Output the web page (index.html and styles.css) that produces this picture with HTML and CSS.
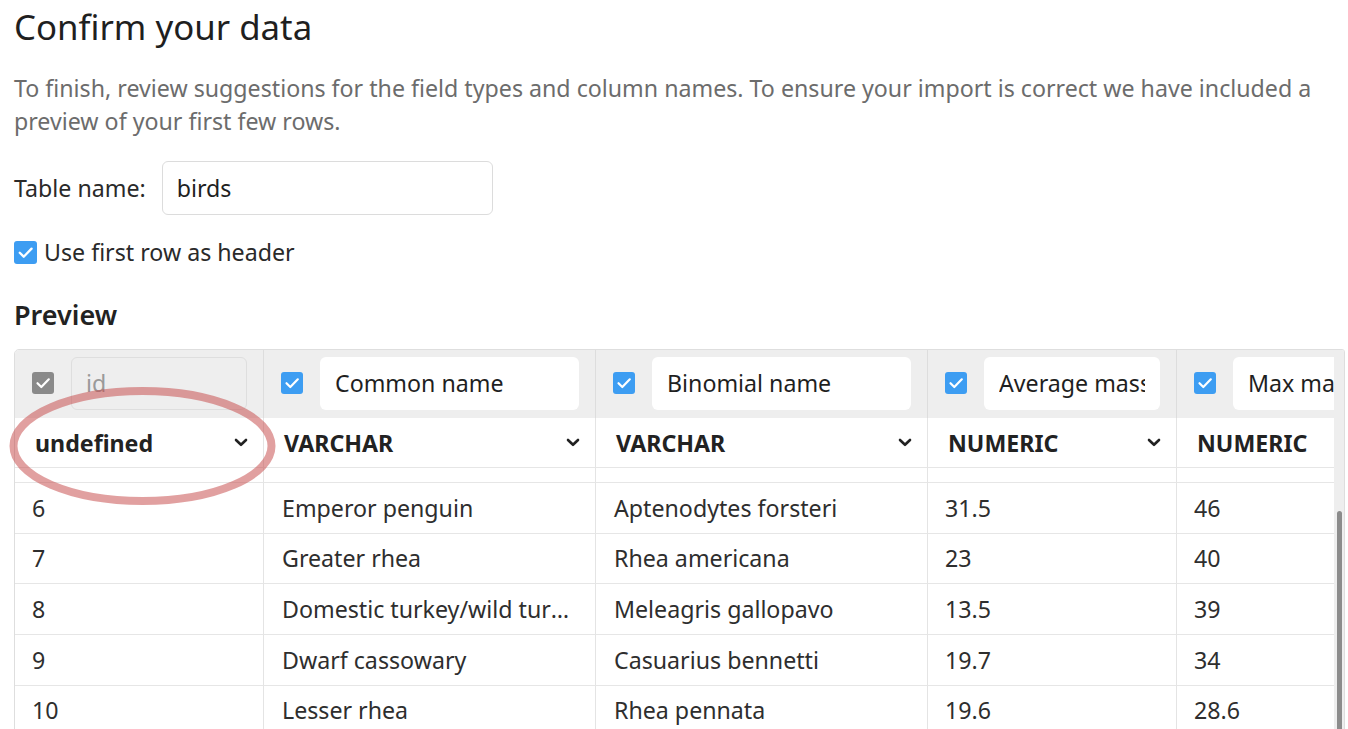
FILE: index.html
```html
<!DOCTYPE html>
<html lang="en">
<head>
<meta charset="utf-8">
<title>Confirm your data</title>
<link rel="stylesheet" href="styles.css">
</head>
<body>
<main class="page">
  <h1 class="title">Confirm your data</h1>
  <p class="intro">To finish, review suggestions for the field types and column names. To ensure your import is correct we have included a preview of your first few rows.</p>

  <div class="name-row">
    <label class="name-label" for="tname">Table name:</label>
    <input class="name-input" id="tname" type="text" value="birds">
  </div>

  <label class="check-row">
    <span class="cb cb-blue"><svg viewBox="0 0 22 22" width="23" height="23"><path d="M5.5 11.2 L9.3 15 L16.8 7.3" fill="none" stroke="#fff" stroke-width="2.2" stroke-linecap="round" stroke-linejoin="round"/></svg></span>
    <span>Use first row as header</span>
  </label>

  <h2 class="preview-title">Preview</h2>

  <div class="preview">
    <div class="viewport">
      <div class="grid">
        <!-- header inputs -->
        <div class="hcell">
          <span class="cb cb-gray"><svg viewBox="0 0 22 22" width="22" height="22"><path d="M5.5 11.2 L9.3 15 L16.8 7.3" fill="none" stroke="#fff" stroke-width="2.2" stroke-linecap="round" stroke-linejoin="round"/></svg></span>
          <input class="col-input col-input-disabled" type="text" value="id" disabled>
        </div>
        <div class="hcell">
          <span class="cb cb-blue"><svg viewBox="0 0 22 22" width="22" height="22"><path d="M5.5 11.2 L9.3 15 L16.8 7.3" fill="none" stroke="#fff" stroke-width="2.2" stroke-linecap="round" stroke-linejoin="round"/></svg></span>
          <input class="col-input" type="text" value="Common name">
        </div>
        <div class="hcell">
          <span class="cb cb-blue"><svg viewBox="0 0 22 22" width="22" height="22"><path d="M5.5 11.2 L9.3 15 L16.8 7.3" fill="none" stroke="#fff" stroke-width="2.2" stroke-linecap="round" stroke-linejoin="round"/></svg></span>
          <input class="col-input" type="text" value="Binomial name">
        </div>
        <div class="hcell">
          <span class="cb cb-blue"><svg viewBox="0 0 22 22" width="22" height="22"><path d="M5.5 11.2 L9.3 15 L16.8 7.3" fill="none" stroke="#fff" stroke-width="2.2" stroke-linecap="round" stroke-linejoin="round"/></svg></span>
          <input class="col-input" type="text" value="Average mass (kg)">
        </div>
        <div class="hcell">
          <span class="cb cb-blue"><svg viewBox="0 0 22 22" width="22" height="22"><path d="M5.5 11.2 L9.3 15 L16.8 7.3" fill="none" stroke="#fff" stroke-width="2.2" stroke-linecap="round" stroke-linejoin="round"/></svg></span>
          <input class="col-input" type="text" value="Max mass (kg)">
        </div>

        <!-- type selects -->
        <div class="tcell"><span>undefined</span><svg class="chev" viewBox="0 0 14 9" width="14" height="9"><path d="M2 2 L7 6.8 L12 2" fill="none" stroke="#222" stroke-width="2.6" stroke-linecap="round" stroke-linejoin="round"/></svg></div>
        <div class="tcell"><span>VARCHAR</span><svg class="chev" viewBox="0 0 14 9" width="14" height="9"><path d="M2 2 L7 6.8 L12 2" fill="none" stroke="#222" stroke-width="2.6" stroke-linecap="round" stroke-linejoin="round"/></svg></div>
        <div class="tcell"><span>VARCHAR</span><svg class="chev" viewBox="0 0 14 9" width="14" height="9"><path d="M2 2 L7 6.8 L12 2" fill="none" stroke="#222" stroke-width="2.6" stroke-linecap="round" stroke-linejoin="round"/></svg></div>
        <div class="tcell"><span>NUMERIC</span><svg class="chev" viewBox="0 0 14 9" width="14" height="9"><path d="M2 2 L7 6.8 L12 2" fill="none" stroke="#222" stroke-width="2.6" stroke-linecap="round" stroke-linejoin="round"/></svg></div>
        <div class="tcell"><span>NUMERIC</span><svg class="chev" viewBox="0 0 14 9" width="14" height="9"><path d="M2 2 L7 6.8 L12 2" fill="none" stroke="#222" stroke-width="2.6" stroke-linecap="round" stroke-linejoin="round"/></svg></div>

        <!-- scrolled-off row remnant -->
        <div class="scell"></div><div class="scell"></div><div class="scell"></div><div class="scell"></div><div class="scell"></div>

        <div class="cell">6</div><div class="cell">Emperor penguin</div><div class="cell">Aptenodytes forsteri</div><div class="cell">31.5</div><div class="cell">46</div>
        <div class="cell">7</div><div class="cell">Greater rhea</div><div class="cell">Rhea americana</div><div class="cell">23</div><div class="cell">40</div>
        <div class="cell">8</div><div class="cell"><span class="clip">Domestic turkey/wild turkey</span></div><div class="cell">Meleagris gallopavo</div><div class="cell">13.5</div><div class="cell">39</div>
        <div class="cell">9</div><div class="cell">Dwarf cassowary</div><div class="cell">Casuarius bennetti</div><div class="cell">19.7</div><div class="cell">34</div>
        <div class="cell">10</div><div class="cell">Lesser rhea</div><div class="cell">Rhea pennata</div><div class="cell">19.6</div><div class="cell">28.6</div>
      </div>
    </div>
    <div class="vscroll"><div class="thumb"></div></div>
  </div>
</main>

<svg class="annotation" viewBox="0 0 1348 729" width="1348" height="729" aria-hidden="true">
  <ellipse cx="142.5" cy="446" rx="129" ry="55" fill="none" stroke="rgba(198,72,72,0.52)" stroke-width="8"/>
</svg>
</body>
</html>
```

FILE: styles.css
```css
* { box-sizing: border-box; }

html, body {
  margin: 0;
  padding: 0;
  background: #fff;
}

body {
  position: relative;
  width: 1348px;
  height: 729px;
  overflow: hidden;
  font-family: "Noto Sans", "Open Sans", sans-serif;
  font-size: 23.2px;
  color: #222;
}

.page {
  padding: 7px 3px 0 14px;
}

.title {
  margin: 0;
  font-size: 34.8px;
  line-height: 40px;
  font-weight: 400;
  color: #1f1f1f;
}

.intro {
  margin: 25px 0 0;
  font-size: 23.2px;
  line-height: 33px;
  color: #6c6c6c;
}

.name-row {
  margin-top: 23px;
  display: flex;
  align-items: center;
  gap: 16px;
}

.name-label {
  color: #2a2a2a;
}

.name-input {
  width: 331px;
  height: 54px;
  border: 1px solid #dcdcdc;
  border-radius: 6px;
  padding: 0 14px;
  font: inherit;
  color: #1f1f1f;
  background: #fff;
  outline: none;
}

.check-row {
  margin-top: 21px;
  height: 32px;
  display: flex;
  align-items: center;
  gap: 7px;
  color: #2a2a2a;
}

.cb {
  flex: none;
  width: 22px;
  height: 22px;
  border-radius: 3px;
  display: inline-flex;
}
.check-row .cb {
  width: 23px;
  height: 23px;
}
.cb-blue { background: #3d9df2; }
.cb-gray { background: #8a8a8a; }

.preview-title {
  margin: 31px 0 0;
  font-size: 27px;
  line-height: 32px;
  font-weight: 600;
  color: #222;
}

.preview {
  margin-top: 18px;
  display: flex;
  border: 1px solid #dedede;
  border-top-left-radius: 5px;
  border-top-right-radius: 3px;
  height: 420px;
  overflow: hidden;
}

.viewport {
  flex: 1;
  overflow: hidden;
  min-width: 0;
}

.grid {
  display: grid;
  grid-template-columns: 249px 332px 332px 249px 332px;
  width: max-content;
}

.hcell {
  height: 68px;
  background: #eeeeee;
  border-right: 1px solid #dddddd;
  display: flex;
  align-items: center;
  gap: 17px;
  padding: 0 16px 2px 17px;
}

.col-input {
  flex: 1;
  min-width: 0;
  height: 53px;
  border: 1px solid transparent;
  border-radius: 6px;
  background: #fff;
  padding: 0 14px;
  font: inherit;
  color: #1f1f1f;
  outline: none;
}

.col-input-disabled {
  background: #eeeeee;
  border-color: #dedede;
  color: #9a9a9a;
}

.tcell {
  height: 50px;
  border-right: 1px solid #e4e4e4;
  border-bottom: 1px solid #e6e6e6;
  display: flex;
  align-items: center;
  justify-content: space-between;
  padding: 0 15px 0 20px;
  font-weight: 700;
  color: #222;
}

.chev { flex: none; }

.scell {
  height: 15px;
  border-right: 1px solid #e4e4e4;
  border-bottom: 1px solid #e6e6e6;
}

.cell {
  height: 50.67px;
  border-right: 1px solid #e4e4e4;
  border-bottom: 1px solid #e6e6e6;
  padding: 0 18px 0 17px;
  display: flex;
  align-items: center;
  color: #2e2e2e;
  white-space: nowrap;
  overflow: hidden;
}

.cell:nth-child(5n+2), .cell:nth-child(5n+3) { padding-left: 18px; }

.clip {
  display: block;
  min-width: 0;
  overflow: hidden;
  text-overflow: ellipsis;
  white-space: nowrap;
}

.vscroll {
  flex: none;
  width: 10px;
  background: #eeeeee;
  padding-top: 161px;
}

.thumb {
  margin-left: 3px;
  width: 5px;
  height: 400px;
  border-radius: 3px;
  background: #8c8c8c;
}

.annotation {
  position: absolute;
  left: 0;
  top: 0;
  pointer-events: none;
}
```
